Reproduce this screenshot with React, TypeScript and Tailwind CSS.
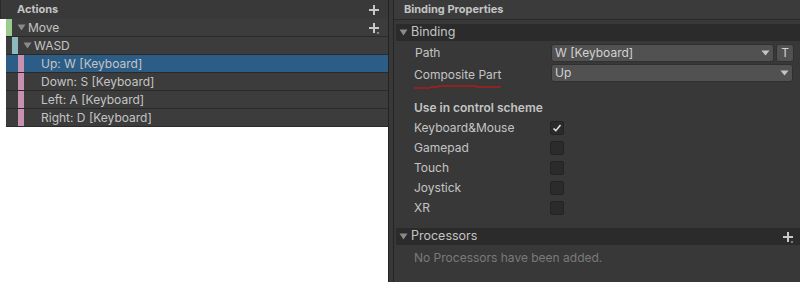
import React from "react";

const font = { fontFamily: "Inter, 'Noto Sans', sans-serif" };

function Plus({ drop }: { drop?: boolean }) {
  return (
    <svg width="12" height="12" viewBox="0 0 12 12" className="shrink-0">
      <path d="M5 1h2v4h4v2H7v4H5V7H1V5h4z" fill="#c8c8c8" />
      {drop && <path d="M8.5 10.5h3l-1.5 1.5z" fill="#c8c8c8" />}
    </svg>
  );
}

function Tri() {
  return (
    <svg width="9" height="9" viewBox="0 0 9 9" className="shrink-0">
      <path d="M0.5 1.5h8l-4 6z" fill="#8a8a8a" />
    </svg>
  );
}

function TreeRow({
  indent,
  color,
  label,
  fold,
  selected,
  plus,
}: {
  indent: number;
  color: string;
  label: string;
  fold?: boolean;
  selected?: boolean;
  plus?: boolean;
}) {
  return (
    <div className={`flex h-[18px] items-center border-b border-[#2a2a2a] ${selected ? "bg-[#2c5d87]" : "bg-[#3c3c3c]"}`}>
      <div style={{ width: indent }} className="h-full shrink-0" />
      <div className={`h-full w-[6px] shrink-0 ${color}`} />
      {fold ? (
        <div className="ml-[5px] flex items-center gap-[2px]">
          <Tri />
          <span className="text-[12px] text-[#c4c4c4]">{label}</span>
        </div>
      ) : (
        <span className="ml-[17px] text-[12px] text-[#c4c4c4]">{label}</span>
      )}
      {plus && (
        <div className="ml-auto mr-[8px]">
          <Plus drop />
        </div>
      )}
    </div>
  );
}

function Dropdown({ value }: { value: string }) {
  return (
    <div className="flex h-[18px] flex-1 items-center justify-between rounded-[3px] border border-[#303030] bg-[#515151] px-[3px]">
      <span className="text-[12px] text-[#d2d2d2]">{value}</span>
      <svg width="9" height="6" viewBox="0 0 9 6">
        <path d="M0.5 0.5h8l-4 5z" fill="#c4c4c4" />
      </svg>
    </div>
  );
}

function Check({ checked }: { checked?: boolean }) {
  return (
    <div className="flex h-[14px] w-[14px] items-center justify-center rounded-[2px] border border-[#232323] bg-[#2b2b2b]">
      {checked && (
        <svg width="10" height="10" viewBox="0 0 10 10">
          <path d="M1.5 5.5l2.3 2.2L8.5 2" stroke="#e0e0e0" strokeWidth="1.6" fill="none" />
        </svg>
      )}
    </div>
  );
}

const schemes = ["Keyboard&Mouse", "Gamepad", "Touch", "Joystick", "XR"];

export default function App() {
  return (
    <div style={font} className="flex h-[282px] w-[800px] bg-white">
      <div className="flex w-[388px] flex-col self-start">
        <div className="flex h-[19px] items-center border-l border-[#2a2a2a] bg-[#393939] pl-[16px] pr-[8px]">
          <span className="text-[11px] font-bold text-[#c4c4c4]">Actions</span>
          <div className="ml-auto">
            <Plus />
          </div>
        </div>
        <div className="ml-[6px]">
          <TreeRow indent={0} color="bg-[#9ccc8c]" label="Move" fold plus />
          <TreeRow indent={6} color="bg-[#8cb8c0]" label="WASD" fold />
          <TreeRow indent={12} color="bg-[#c792b0]" label="Up: W [Keyboard]" selected />
          <TreeRow indent={12} color="bg-[#c792b0]" label="Down: S [Keyboard]" />
          <TreeRow indent={12} color="bg-[#c792b0]" label="Left: A [Keyboard]" />
          <TreeRow indent={12} color="bg-[#c792b0]" label="Right: D [Keyboard]" />
        </div>
      </div>
      <div className="flex h-full w-[6px] border-x border-[#242424] bg-[#383838]" />
      <div className="flex h-full flex-1 flex-col bg-[#383838]">
        <div className="flex h-[20px] items-center border-b border-[#2a2a2a] bg-[#3b3b3b] pl-[10px]">
          <span className="text-[11px] font-bold text-[#c4c4c4]">Binding Properties</span>
        </div>
        <div className="ml-[2px] mt-[4px] flex h-[17px] items-center gap-[3px] bg-[#2b2b2b] pl-[3px]">
          <Tri />
          <span className="text-[12.5px] text-[#c4c4c4]">Binding</span>
        </div>
        <div className="mt-[3px] flex h-[18px] items-center pl-[21px] pr-[6px]">
          <span className="w-[136px] text-[12px] text-[#c4c4c4]">Path</span>
          <Dropdown value="W [Keyboard]" />
          <div className="ml-[2px] flex h-[18px] w-[18px] items-center justify-center rounded-[3px] border border-[#303030] bg-[#515151] text-[12px] text-[#d2d2d2]">
            T
          </div>
        </div>
        <div className="mt-[2px] flex h-[18px] items-center pl-[20px] pr-[7px]">
          <div className="relative w-[137px]">
            <span className="text-[12px] text-[#c4c4c4]">Composite Part</span>
            <svg width="90" height="4" viewBox="0 0 90 4" className="absolute left-0 top-[24px]">
              <path d="M0 3H16V2H24V1H62V2H86V1" stroke="#e01010" strokeWidth="1" fill="none" />
            </svg>
          </div>
          <Dropdown value="Up" />
        </div>
        <div className="mt-[16px] pl-[20px] text-[12px] font-semibold leading-[20px] text-[#c4c4c4]">Use in control scheme</div>
        {schemes.map((s, i) => (
          <div key={s} className="flex h-[20px] items-center pl-[20px]">
            <span className="w-[136px] text-[12px] text-[#c4c4c4]">{s}</span>
            <Check checked={i === 0} />
          </div>
        ))}
        <div className="ml-[2px] mt-[10px] flex h-[17px] items-center gap-[3px] bg-[#2b2b2b] pl-[3px] pr-[6px]">
          <Tri />
          <span className="text-[12.5px] text-[#c4c4c4]">Processors</span>
          <div className="ml-auto">
            <Plus drop />
          </div>
        </div>
        <div className="mt-[3px] pl-[20px] text-[12px] leading-[20px] text-[#7a7a7a]">No Processors have been added.</div>
      </div>
    </div>
  );
}
